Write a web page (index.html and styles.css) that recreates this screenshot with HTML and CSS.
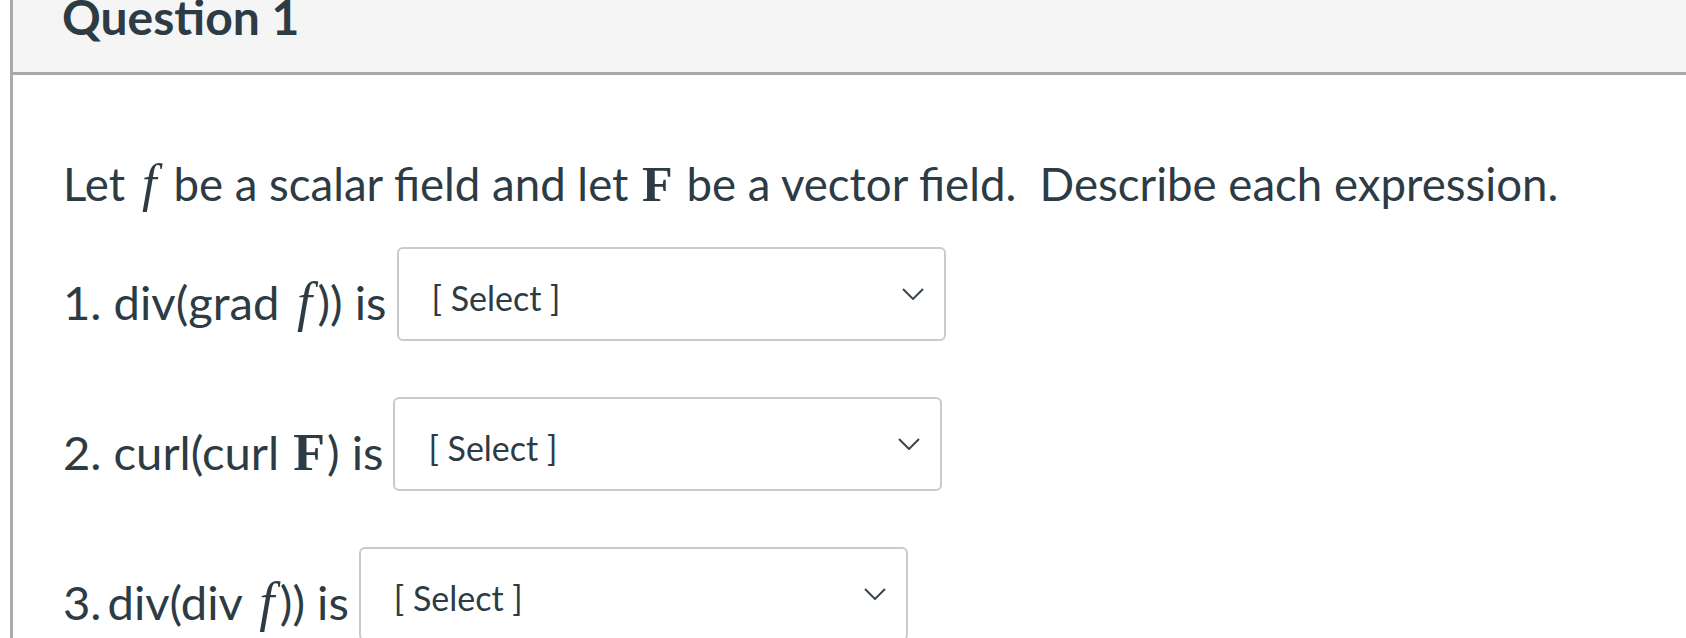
FILE: index.html
```html
<!DOCTYPE html>
<html lang="en">
<head>
<meta charset="utf-8">
<title>Question 1</title>
<link rel="stylesheet" href="styles.css">
</head>
<body>
<div class="question">
  <div class="q-header">
    <h2 class="q-title">Question 1</h2>
  </div>
  <div class="q-body">
    <p class="q-intro">Let <span class="mi">f</span> be a scalar field and let <span class="mb">F</span> be a vector field.&nbsp; Describe each expression.</p>
    <div class="q-row">
      <span class="q-label">1. div(grad <span class="mi">f</span>)) is</span>
      <div class="q-select"><span class="q-select-text">[ Select ]</span><svg class="chev" width="22" height="12" viewBox="0 0 22 12"><path d="M1 1 L11 11 L21 1" fill="none" stroke="#3a4650" stroke-width="2"/></svg></div>
    </div>
    <div class="q-row">
      <span class="q-label">2. curl(curl <span class="mb">F</span>) is</span>
      <div class="q-select"><span class="q-select-text">[ Select ]</span><svg class="chev" width="22" height="12" viewBox="0 0 22 12"><path d="M1 1 L11 11 L21 1" fill="none" stroke="#3a4650" stroke-width="2"/></svg></div>
    </div>
    <div class="q-row">
      <span class="q-label"><span class="num-tight">3. </span>div(div <span class="mi">f</span>)) is</span>
      <div class="q-select"><span class="q-select-text">[ Select ]</span><svg class="chev" width="22" height="12" viewBox="0 0 22 12"><path d="M1 1 L11 11 L21 1" fill="none" stroke="#3a4650" stroke-width="2"/></svg></div>
    </div>
  </div>
</div>
</body>
</html>
```
FILE: styles.css
```css
html, body {
  margin: 0;
  padding: 0;
  background: #ffffff;
}
body {
  font-family: Lato, "Open Sans", sans-serif;
  color: #2d3b45;
  overflow: hidden;
  height: 638px;
}
.question {
  margin-left: 10px;
  border-left: 3px solid #aaaaaa;
  min-height: 700px;
}
.q-header {
  height: 72px;
  background: #f5f5f5;
  border-bottom: 3px solid #a8a8a8;
  padding-left: 49px;
  overflow: hidden;
}
.q-title {
  margin: -12px 0 0 0;
  font-weight: 700;
  font-size: 48px;
  line-height: 58px;
}
.q-body {
  padding-left: 50px;
}
.q-intro {
  margin: 0;
  padding-top: 80px;
  font-size: 45.6px;
  line-height: 58px;
}
.mi {
  font-family: "Liberation Serif", serif;
  font-style: italic;
  font-size: 1.15em;
  line-height: 1;
  margin: 0 0.1em 0 0.1em;
}
.mb {
  font-family: "Liberation Serif", serif;
  font-weight: 700;
  font-size: 1.1em;
  line-height: 1;
  margin: 0 0.04em;
}
.num-tight {
  word-spacing: -0.13em;
}
.q-row {
  display: flex;
  align-items: center;
  gap: 10px;
  height: 150px;
  padding-top: 12px;
  box-sizing: border-box;
}
.q-label {
  font-size: 47.2px;
  line-height: 56px;
  padding-top: 15px;
  white-space: nowrap;
}
.q-select {
  box-sizing: border-box;
  width: 549px;
  height: 94px;
  border: 2px solid #c8cbce;
  border-radius: 6px;
  display: flex;
  align-items: center;
  justify-content: space-between;
  padding: 0 20px 0 33px;
}
.q-select-text {
  font-size: 34px;
  line-height: 44px;
  padding-top: 8px;
}
.chev {
  display: block;
}
```
